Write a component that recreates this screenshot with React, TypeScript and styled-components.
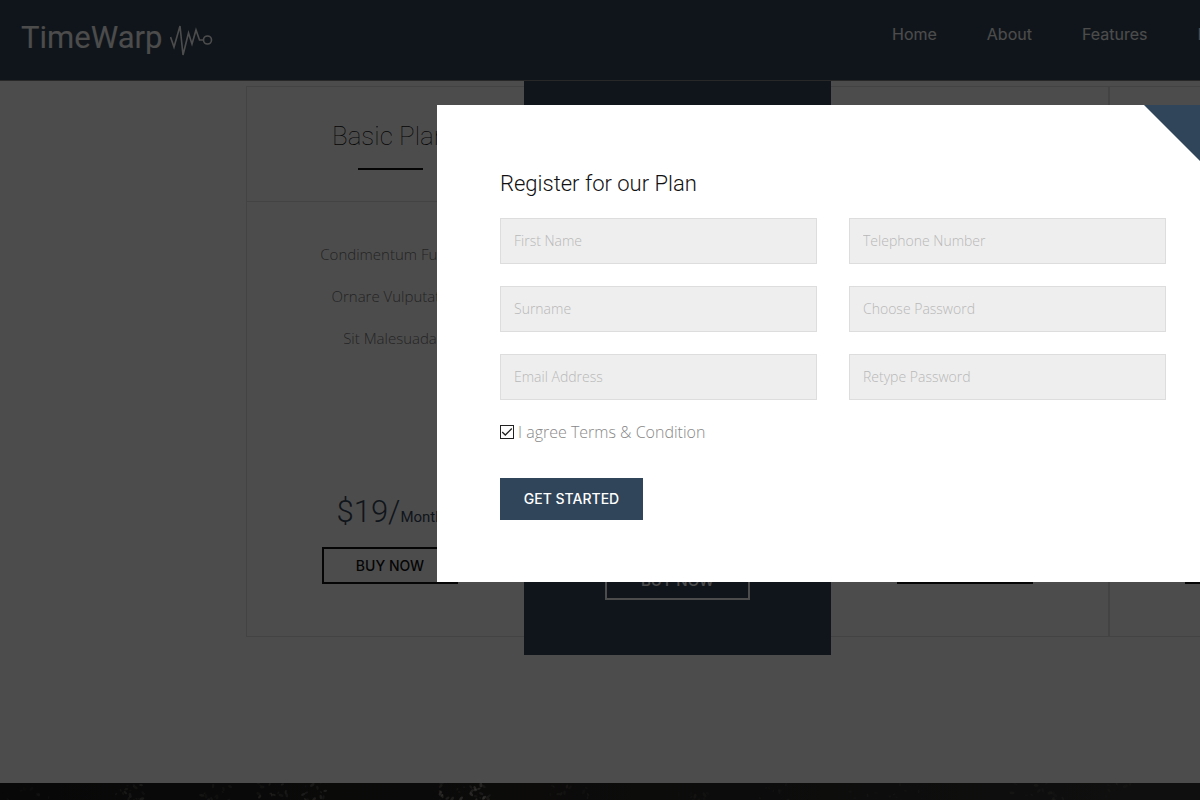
import React from "react";
import styled, { createGlobalStyle, css } from "styled-components";

const GlobalStyle = createGlobalStyle`
  *, *::before, *::after { box-sizing: border-box; }
  body { margin: 0; background: #fff; font-family: "Open Sans", sans-serif; overflow: hidden; }
  h1, h2, h3, p, ul { margin: 0; padding: 0; }
  ul { list-style: none; }
`;

const Page = styled.div`
  display: flex;
  flex-direction: column;
  height: 100vh;
  overflow: hidden;
`;

const Header = styled.header`
  position: relative;
  z-index: 2;
  flex: none;
  display: flex;
  justify-content: space-between;
  height: 81px;
  padding-left: 21px;
  background: #38495c;
  border-bottom: 1px solid #85878a;
`;

const Logo = styled.a`
  display: flex;
  align-items: center;
  gap: 8px;
  height: 76px;
  color: #fff;
  font: 400 31px/40px Roboto, sans-serif;
  text-decoration: none;
`;

const Pulse = styled.svg`
  width: 44px;
  height: 32px;
  margin-top: 4px;
`;

const Nav = styled.nav`
  flex: 0 0 308px;
  min-width: 0;
  display: flex;
  gap: 50px;
  padding-top: 24px;
  white-space: nowrap;
`;

const NavLink = styled.a`
  flex: none;
  color: #fff;
  font: 400 16px/20px Inter, sans-serif;
  text-decoration: none;
`;

const Pricing = styled.main`
  flex: none;
  display: flex;
  align-items: stretch;
  padding: 5px 0 146px 246px;
`;

const Card = styled.section<{ $featured?: boolean }>`
  flex: 0 0 288px;
  display: flex;
  flex-direction: column;
  align-items: center;
  min-height: 551px;
  padding-bottom: 52px;
  border: 1px solid #e0e0e0;
  color: #111;
  ${(p) =>
    p.$featured &&
    css`
      position: relative;
      z-index: 1;
      flex-basis: 307px;
      margin: -18px -10px;
      padding-bottom: 55px;
      background: #38495c;
      border: 0;
      color: #fff;
    `}
`;

const CardHead = styled.div`
  display: flex;
  flex-direction: column;
  align-items: center;
  align-self: stretch;
  gap: 14px;
  height: 115px;
  padding-top: 32px;
  border-bottom: 1px solid #e0e0e0;
`;

const PlanName = styled.h3`
  font: 100 26px/35px Roboto, sans-serif;
`;

const Rule = styled.span`
  width: 65px;
  height: 2px;
  background: currentColor;
`;

const Perks = styled.ul`
  padding-top: 31px;
  flex: 1;
  color: #777;
  font: 300 15px/42px "Open Sans", sans-serif;
  text-align: center;
`;

const Price = styled.p`
  margin-bottom: 10px;
  color: #38495c;
  font: 300 31px/40px Roboto, sans-serif;
`;

const Period = styled.small`
  font-size: 15px;
  font-weight: 400;
`;

const BuyButton = styled.button<{ $wide?: boolean }>`
  width: ${(p) => (p.$wide ? 145 : 136)}px;
  height: ${(p) => (p.$wide ? 39 : 37)}px;
  padding: 0;
  background: transparent;
  border: 2px solid currentColor;
  color: inherit;
  font: 500 ${(p) => (p.$wide ? 15 : 14)}px/20px Inter, sans-serif;
`;

const Photo = styled.footer`
  flex: 1 0 17px;
  overflow: hidden;
  background: linear-gradient(90deg, #1c1c1c, #282624 45%, #343434);
`;

const Grain = styled.svg`
  display: block;
`;

const Overlay = styled.div`
  position: fixed;
  inset: 0;
  z-index: 10;
  display: flex;
  align-items: flex-start;
  padding: 105px 0 0 437px;
  overflow: hidden;
  background: rgba(0, 0, 0, 0.7);
`;

const Modal = styled.div`
  position: relative;
  flex: 0 0 792px;
  padding: 62px 63px;
  background: #fff;
`;

const Corner = styled.button`
  position: absolute;
  top: 0;
  right: 0;
  width: 85px;
  height: 85px;
  border: 0;
  background: #304559;
  clip-path: polygon(0 0, 100% 0, 100% 100%);
`;

const Title = styled.h2`
  color: #111;
  font: 300 22px/34px Roboto, sans-serif;
`;

const Fields = styled.div`
  display: grid;
  grid-template-columns: 1fr 1fr;
  gap: 22px 32px;
  margin-top: 17px;
`;

const Field = styled.input`
  width: 100%;
  height: 46px;
  padding: 0 13px 2px;
  background: #eee;
  border: 1px solid #ddd;
  border-radius: 0;
  font: 300 14px/20px "Open Sans", sans-serif;
  &::placeholder { color: #b8b8b8; opacity: 1; }
`;

const Agree = styled.label`
  display: flex;
  align-items: center;
  gap: 4px;
  margin-top: 20px;
  color: #888;
  font: 300 16px/24px "Open Sans", sans-serif;
`;

const Tick = styled.input`
  appearance: none;
  width: 14px;
  height: 14px;
  margin: 0;
  border: 1px solid #222;
  background: #fff;
  &:checked {
    background: url("data:image/svg+xml,%3Csvg xmlns='http://www.w3.org/2000/svg' viewBox='0 0 12 12'%3E%3Cpath d='M1.200 6 4.300 9 10.800 2.500' fill='none' stroke='%23222' stroke-width='1.3'/%3E%3C/svg%3E");
  }
`;

const Submit = styled.button`
  display: block;
  width: 143px;
  height: 42px;
  margin-top: 34px;
  padding: 0;
  border: 0;
  background: #304559;
  color: #fff;
  font: 500 14px/20px Inter, sans-serif;
`;

const perks = ["Condimentum Fusce", "Ornare Vulputate", "Sit Malesuada"];
const plans = [
  { name: "Basic Plan", price: 19 },
  { name: "Silver Plan", price: 29, featured: true },
  { name: "Gold Plan", price: 39 },
  { name: "Ultra Plan", price: 49 },
];
const fields = [
  ["First Name", "text"],
  ["Telephone Number", "tel"],
  ["Surname", "text"],
  ["Choose Password", "password"],
  ["Email Address", "email"],
  ["Retype Password", "password"],
];

// Bright patches in the dark photograph: centre, spread, number of flecks, brightness.
const patches = [
  [30, 22, 8, 0.1],
  [130, 14, 18, 0.25],
  [215, 18, 12, 0.2],
  [292, 34, 28, 0.3],
  [465, 26, 30, 0.45],
  [570, 24, 12, 0.2],
  [690, 20, 10, 0.12],
  [775, 16, 8, 0.12],
  [880, 40, 12, 0.1],
  [1040, 30, 14, 0.12],
  [1120, 16, 8, 0.12],
];

// Small seeded generator, so that the flecks fall in the same places on each load.
let seed = 7;
const random = () => {
  seed = (seed * 16807) % 2147483647;
  return seed / 2147483647;
};
const flecks = patches.flatMap(([x, spread, count, light]) =>
  Array.from({ length: count }, () => ({
    x: x + (random() * 2 - 1) * spread,
    y: random() * 18,
    r: 0.6 + random() * 0.9,
    turn: random() * 180,
    light: light * (0.3 + random() * 0.8),
  }))
);

export default function App() {
  return (
    <>
      <GlobalStyle />
      <Page>
        <Header>
          <Logo href="#home">
            TimeWarp
            <Pulse viewBox="0 0 44 32" fill="none" stroke="currentColor" strokeWidth="1.6" aria-hidden="true">
              <path d="M0.500 13 4 23 10 2 13 31 18.500 9 22 20 26 6 29.500 16H33.500" />
              <circle cx="37.500" cy="16" r="4" />
            </Pulse>
          </Logo>
          <Nav>
            {["Home", "About", "Features", "Pricing"].map((item) => (
              <NavLink key={item} href={"#" + item.toLowerCase()}>{item}</NavLink>
            ))}
          </Nav>
        </Header>
        <Pricing>
          {plans.map((plan) => (
            <Card key={plan.name} $featured={plan.featured}>
              <CardHead>
                <PlanName>{plan.name}</PlanName>
                <Rule />
              </CardHead>
              <Perks>{perks.map((perk) => <li key={perk}>{perk}</li>)}</Perks>
              <Price>${plan.price}/<Period>Month</Period></Price>
              <BuyButton type="button" $wide={plan.featured}>BUY NOW</BuyButton>
            </Card>
          ))}
        </Pricing>
        <Photo>
          <Grain width="1200" height="17" aria-hidden="true">
            {flecks.map((f, i) => (
              <ellipse key={i} cx={f.x} cy={f.y} rx={f.r * 1.8} ry={f.r} fill="#e8e4da" opacity={f.light} transform={`rotate(${f.turn} ${f.x} ${f.y})`} />
            ))}
          </Grain>
        </Photo>
      </Page>
      <Overlay>
        <Modal role="dialog" aria-labelledby="register-title">
          <Corner type="button" aria-label="Close" />
          <form onSubmit={(e) => e.preventDefault()}>
            <Title id="register-title">Register for our Plan</Title>
            <Fields>
              {fields.map(([label, type]) => (
                <Field key={label} type={type} placeholder={label} aria-label={label} />
              ))}
            </Fields>
            <Agree>
              <Tick type="checkbox" defaultChecked />
              I agree Terms &amp; Condition
            </Agree>
            <Submit type="submit">GET STARTED</Submit>
          </form>
        </Modal>
      </Overlay>
    </>
  );
}
